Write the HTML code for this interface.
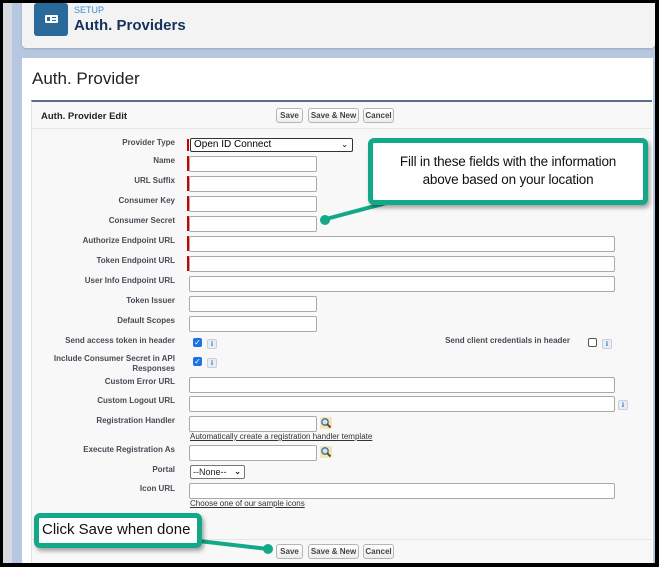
<!DOCTYPE html>
<html><head><meta charset="utf-8"><style>
*{box-sizing:border-box;margin:0;padding:0}
body{width:659px;height:567px;background:#000;position:relative;overflow:hidden;font-family:"Liberation Sans",Arial,sans-serif}
.a{position:absolute}
.lbl{position:absolute;right:484px;font-size:8px;font-weight:bold;color:#4a4a56;text-align:right;line-height:10px;white-space:nowrap}
.in{position:absolute;height:16px;border:1px solid #a9a9a9;border-radius:2px;background:#fff}
.req{position:absolute;width:2px;background:#c00;height:15px}
.btn{position:absolute;height:15px;border:1px solid #b5b5b5;border-radius:3px;background:linear-gradient(#fff,#ededed);font-size:8px;font-weight:bold;color:#444;text-align:center;line-height:13px}
.info{position:absolute;width:10px;height:10px;background:#e9eef5;border:1px solid #c6d0dc;border-radius:2px;font-size:7px;font-weight:bold;color:#2a6fbf;text-align:center;line-height:8px;font-family:"Liberation Serif",serif}
.cb{position:absolute;width:9px;height:9px;border-radius:2px;background:#1a73e8;color:#fff;font-size:8px;line-height:9px;text-align:center}
.lnk{position:absolute;font-size:8px;color:#333;text-decoration:underline}
.mag{position:absolute;width:12px;height:12px}
</style></head><body>
<div class="a" style="left:3px;top:3px;width:652px;height:560px;background:#b7c7df"></div>
<div class="a" style="left:3px;top:3px;width:9px;height:560px;background:#d6d9de"></div>
<div class="a" style="left:22px;top:0px;width:633px;height:48px;background:#f3f3f3;border-radius:0 0 4px 4px;box-shadow:0 1px 2px rgba(0,0,0,.15)"></div>
<div class="a" style="left:0;top:0;width:659px;height:3px;background:#000"></div>
<div class="a" style="left:34px;top:3px;width:34px;height:33px;background:#2a6a9a;border-radius:3px"></div>
<div class="a" style="left:45px;top:15px;width:13px;height:8px;background:#fff;border-radius:1px"></div>
<div class="a" style="left:47px;top:17px;width:3px;height:4px;background:#2a6a9a"></div>
<div class="a" style="left:52px;top:17px;width:4px;height:1px;background:#2a6a9a"></div>
<div class="a" style="left:52px;top:20px;width:4px;height:1px;background:#2a6a9a"></div>
<div class="a" style="left:74px;top:5px;font-size:9px;color:#3b8ed4">SETUP</div>
<div class="a" style="left:74px;top:17px;font-size:15px;font-weight:bold;color:#16325c">Auth. Providers</div>
<div class="a" style="left:22px;top:58px;width:631px;height:505px;background:#fff"></div>
<div class="a" style="left:32px;top:69px;font-size:17px;color:#222">Auth. Provider</div>
<div class="a" style="left:31px;top:100px;width:621px;height:463px;background:#f8f8f8;border-top:2px solid #5a6d8c;border-left:1px solid #e4e4e4"></div>
<div class="a" style="left:31px;top:128px;width:621px;height:1px;background:#e6e6e6"></div>
<div class="a" style="left:41px;top:111px;font-size:9.5px;font-weight:bold;color:#222">Auth. Provider Edit</div>
<div class="btn" style="left:276px;top:108px;width:27px">Save</div>
<div class="btn" style="left:308px;top:108px;width:51px">Save &amp; New</div>
<div class="btn" style="left:363px;top:108px;width:31px">Cancel</div>

<div class="lbl" style="top:138px">Provider Type</div>
<div class="req" style="left:187px;top:139px;height:12px"></div>
<div class="a" style="left:190px;top:138px;width:163px;height:14px;border:1px solid #333;border-radius:2px;background:#fff;font-size:10px;color:#000;padding-left:3px;line-height:12px">Open ID Connect<span style="position:absolute;right:4px;font-size:8px">&#8964;</span></div>

<div class="lbl" style="top:156px">Name</div><div class="req" style="left:187px;top:156px"></div><div class="in" style="left:189px;top:156px;width:128px"></div>
<div class="lbl" style="top:176px">URL Suffix</div><div class="req" style="left:187px;top:176px"></div><div class="in" style="left:189px;top:176px;width:128px"></div>
<div class="lbl" style="top:196px">Consumer Key</div><div class="req" style="left:187px;top:196px"></div><div class="in" style="left:189px;top:196px;width:128px"></div>
<div class="lbl" style="top:216px">Consumer Secret</div><div class="req" style="left:187px;top:216px"></div><div class="in" style="left:189px;top:216px;width:128px"></div>
<div class="lbl" style="top:236px">Authorize Endpoint URL</div><div class="req" style="left:187px;top:236px"></div><div class="in" style="left:189px;top:236px;width:426px"></div>
<div class="lbl" style="top:256px">Token Endpoint URL</div><div class="req" style="left:187px;top:256px"></div><div class="in" style="left:189px;top:256px;width:426px"></div>
<div class="lbl" style="top:276px">User Info Endpoint URL</div><div class="in" style="left:189px;top:276px;width:426px"></div>
<div class="lbl" style="top:296px">Token Issuer</div><div class="in" style="left:189px;top:296px;width:128px"></div>
<div class="lbl" style="top:316px">Default Scopes</div><div class="in" style="left:189px;top:316px;width:128px"></div>

<div class="lbl" style="top:336px">Send access token in header</div>
<div class="cb" style="left:193px;top:338px">✓</div><div class="info" style="left:207px;top:339px">i</div>
<div class="lbl" style="top:336px;right:89px">Send client credentials in header</div>
<div class="a" style="left:588px;top:338px;width:9px;height:9px;border:1px solid #555;border-radius:2px;background:#fff"></div>
<div class="info" style="left:602px;top:339px">i</div>

<div class="lbl" style="top:354px">Include Consumer Secret in API<br>Responses</div>
<div class="cb" style="left:193px;top:357px">✓</div><div class="info" style="left:207px;top:358px">i</div>

<div class="lbl" style="top:377px">Custom Error URL</div><div class="in" style="left:189px;top:377px;width:426px"></div>
<div class="lbl" style="top:396px">Custom Logout URL</div><div class="in" style="left:189px;top:396px;width:426px"></div><div class="info" style="left:618px;top:400px">i</div>
<div class="lbl" style="top:416px">Registration Handler</div><div class="in" style="left:189px;top:416px;width:128px"></div>
<svg class="mag" style="left:320px;top:417px" viewBox="0 0 12 12"><rect x="0" y="0" width="12" height="12" rx="2" fill="#f1e6b8"/><circle cx="5" cy="5" r="3.2" fill="#cfe3f5" stroke="#4a6b8c" stroke-width="1.3"/><path d="M7.3 7.3 L10.5 10.5" stroke="#6b4a1f" stroke-width="2"/></svg>
<div class="lnk" style="left:190px;top:432px">Automatically create a registration handler template</div>
<div class="lbl" style="top:445px">Execute Registration As</div><div class="in" style="left:189px;top:445px;width:128px"></div>
<svg class="mag" style="left:320px;top:446px" viewBox="0 0 12 12"><rect x="0" y="0" width="12" height="12" rx="2" fill="#f1e6b8"/><circle cx="5" cy="5" r="3.2" fill="#cfe3f5" stroke="#4a6b8c" stroke-width="1.3"/><path d="M7.3 7.3 L10.5 10.5" stroke="#6b4a1f" stroke-width="2"/></svg>
<div class="lbl" style="top:465px">Portal</div>
<div class="a" style="left:190px;top:465px;width:55px;height:14px;border:1px solid #777;border-radius:2px;background:#fff;font-size:9px;color:#222;padding-left:2px;line-height:12px">--None--<span style="position:absolute;right:3px;font-size:8px;font-weight:bold">&#8964;</span></div>
<div class="lbl" style="top:484px">Icon URL</div><div class="in" style="left:189px;top:483px;width:426px"></div>
<div class="lnk" style="left:190px;top:499px">Choose one of our sample icons</div>

<div class="a" style="left:31px;top:539px;width:621px;height:1px;background:#e6e6e6"></div>
<div class="btn" style="left:276px;top:544px;width:27px">Save</div>
<div class="btn" style="left:308px;top:544px;width:51px">Save &amp; New</div>
<div class="btn" style="left:363px;top:544px;width:31px">Cancel</div>

<svg class="a" style="left:0;top:0" width="659" height="567">
<line x1="390" y1="202" x2="326" y2="219" stroke="#13a888" stroke-width="4"/>
<circle cx="325" cy="220" r="5" fill="#13a888"/>
<line x1="190" y1="540" x2="268" y2="549" stroke="#13a888" stroke-width="4"/>
<circle cx="268" cy="549" r="5" fill="#13a888"/>
</svg>
<div class="a" style="left:368px;top:138px;width:280px;height:67px;border:5px solid #13a888;border-radius:6px;background:#fff;box-shadow:2px 3px 4px rgba(0,0,0,.35);font-size:13.5px;color:#111;text-align:center;line-height:18px;padding-top:10px;letter-spacing:-0.2px">Fill in these fields with the information<br>above based on your location</div>
<div class="a" style="left:34px;top:513px;width:168px;height:35px;border:5px solid #13a888;border-radius:6px;background:#fff;box-shadow:2px 3px 4px rgba(0,0,0,.35);font-size:15px;color:#111;line-height:24px;padding-left:3px">Click Save when done</div>

<div class="a" style="left:0;top:0;width:3px;height:567px;background:#000"></div>
<div class="a" style="left:655px;top:0;width:4px;height:567px;background:#000"></div>
<div class="a" style="left:0;top:563px;width:659px;height:4px;background:#000"></div>
</body></html>
